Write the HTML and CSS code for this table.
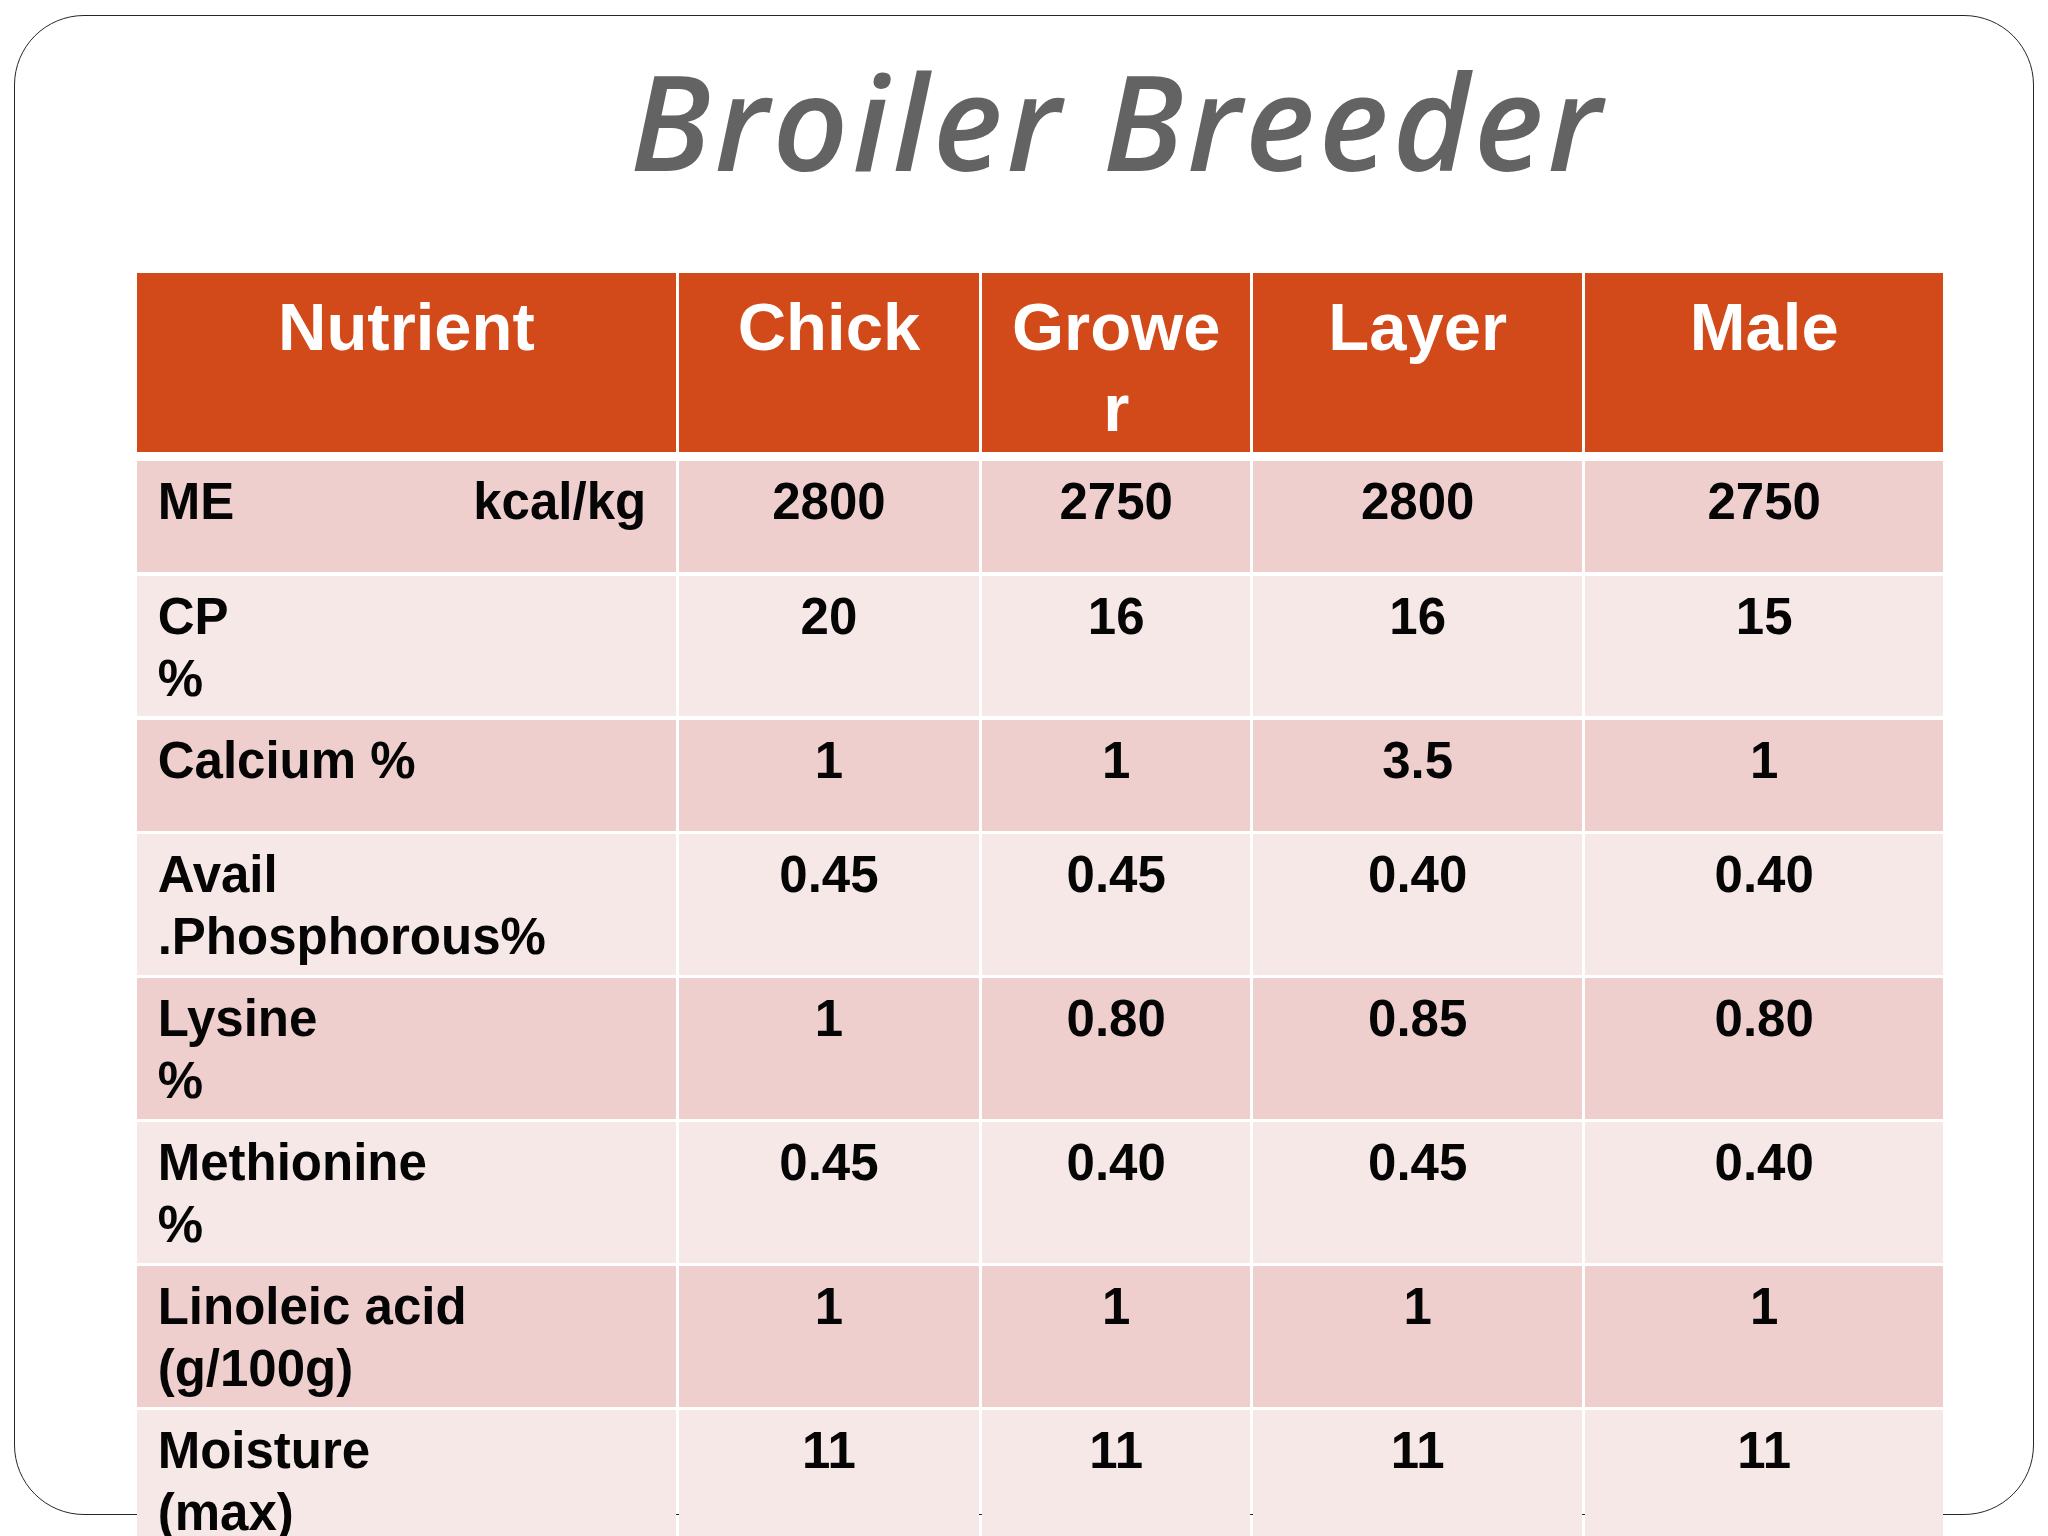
FILE: index.html
```html
<!DOCTYPE html>
<html lang="en">
<head>
<meta charset="utf-8">
<title>Broiler Breeder</title>
<link rel="stylesheet" href="styles.css">
</head>
<body>
<div class="slide">
  <h1 class="title">Broiler Breeder</h1>
  <div class="table">
    <div class="thead">
      <div class="th">Nutrient</div>
      <div class="th">Chick</div>
      <div class="th">Growe<br>r</div>
      <div class="th">Layer</div>
      <div class="th">Male</div>
    </div>
    <div class="tbody">
      <div class="row dark single">
        <div class="td name split"><span>ME</span><span>kcal/kg</span></div>
        <div class="td">2800</div>
        <div class="td">2750</div>
        <div class="td">2800</div>
        <div class="td">2750</div>
      </div>
      <div class="row light double">
        <div class="td name">CP<br>%</div>
        <div class="td">20</div>
        <div class="td">16</div>
        <div class="td">16</div>
        <div class="td">15</div>
      </div>
      <div class="row dark single">
        <div class="td name">Calcium %</div>
        <div class="td">1</div>
        <div class="td">1</div>
        <div class="td">3.5</div>
        <div class="td">1</div>
      </div>
      <div class="row light double">
        <div class="td name">Avail<br>.Phosphorous%</div>
        <div class="td">0.45</div>
        <div class="td">0.45</div>
        <div class="td">0.40</div>
        <div class="td">0.40</div>
      </div>
      <div class="row dark double">
        <div class="td name">Lysine<br>%</div>
        <div class="td">1</div>
        <div class="td">0.80</div>
        <div class="td">0.85</div>
        <div class="td">0.80</div>
      </div>
      <div class="row light double">
        <div class="td name">Methionine<br>%</div>
        <div class="td">0.45</div>
        <div class="td">0.40</div>
        <div class="td">0.45</div>
        <div class="td">0.40</div>
      </div>
      <div class="row dark double">
        <div class="td name">Linoleic acid<br>(g/100g)</div>
        <div class="td">1</div>
        <div class="td">1</div>
        <div class="td">1</div>
        <div class="td">1</div>
      </div>
      <div class="row light double">
        <div class="td name">Moisture<br>(max)</div>
        <div class="td">11</div>
        <div class="td">11</div>
        <div class="td">11</div>
        <div class="td">11</div>
      </div>
    </div>
  </div>
</div>
</body>
</html>
```
FILE: styles.css
```css
html, body {
  margin: 0;
  padding: 0;
  width: 2048px;
  height: 1536px;
  overflow: hidden;
  background: #ffffff;
}

.slide {
  box-sizing: border-box;
  margin: 15px 0 0 14px;
  width: 2020px;
  height: 1500px;
  border: 1.8px solid #262626;
  border-radius: 70px;
  background: #ffffff;
}

.title {
  margin: 38px 0 0 615px;
  width: 972px;
  height: 132px;
  font-family: "Open Sans", sans-serif;
  font-style: italic;
  font-weight: 600;
  font-size: 132px;
  line-height: 132px;
  letter-spacing: 4px;
  color: #636363;
  text-align: center;
  white-space: nowrap;
}

.table {
  margin: 87px 0 0 122.2px;
  width: 1806px;
  font-family: "Liberation Sans", Arial, sans-serif;
  font-weight: bold;
}

.thead,
.row {
  display: grid;
  grid-template-columns: 538.5px 300.5px 268px 329px 358px;
  column-gap: 3px;
}

.th {
  box-sizing: border-box;
  height: 179px;
  padding-top: 13px;
  background: #d24a19;
  color: #ffffff;
  font-size: 67px;
  line-height: 81px;
  text-align: center;
}

.tbody {
  margin-top: 9px;
  display: flex;
  flex-direction: column;
  row-gap: 3.7px;
}

.row.single { height: 111px; }
.row.double { height: 140.3px; }

.row.dark .td { background: #eecfce; }
.row.light .td { background: #f6e8e7; }

.td {
  box-sizing: border-box;
  padding-top: 10px;
  color: #050505;
  font-size: 51px;
  line-height: 62px;
  text-align: center;
}

.td.name {
  text-align: left;
  padding-left: 20.5px;
}

.td.split {
  display: flex;
  justify-content: space-between;
  align-items: flex-start;
  padding-right: 29.5px;
}
```
